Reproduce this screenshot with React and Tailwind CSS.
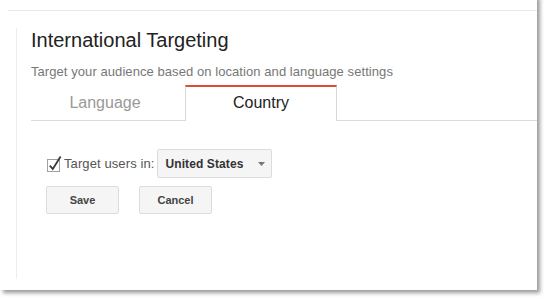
import React from 'react';

export default function App() {
    return (
        <div className="w-[550px] h-[300px] bg-white overflow-hidden font-['Liberation_Sans',Arial,sans-serif]">
            <div className="w-[537px] h-[295px] -mt-[5px] bg-white shadow-[3px_3px_4px_rgba(0,0,0,0.4)] pt-[15px] pl-[8px]">
                <div className="border-t border-[#ebebeb]">
                    <div className="ml-[8px] h-[251px] border-l border-[#ededed] pl-[14px]">
                        <h1 className="mt-[17px] text-[20px] leading-[24px] text-[#222] font-normal">International Targeting</h1>
                        <p className="mt-[12px] text-[13px] leading-[16px] text-[#777] tracking-[0.07px]">Target your audience based on location and language settings</p>

                        {/* tabs */}
                        <div className="mt-[5px] flex">
                            <div className="w-[154px] h-[36px] border-b border-[#dcdcdc] flex items-center justify-center text-[16px] leading-[24px] text-[#999] pr-[6px]">
                                Language
                            </div>
                            <div className="w-[152px] h-[36px] border-t-2 border-t-[#dd4b39] border-x border-x-[#d8d8d8] flex items-center justify-center text-[16px] leading-[24px] text-[#222] pb-[2px]">
                                Country
                            </div>
                            <div className="flex-1 h-[36px] border-b border-[#dcdcdc]"></div>
                        </div>

                        <div className="mt-[28px] pl-[16px] flex items-center">
                            <svg width="15" height="18" viewBox="0 0 15 18" className="shrink-0">
                                <rect x="0.5" y="4.5" width="12" height="12" fill="#fff" stroke="#a0a0a0" />
                                <path d="M2.8 10.6 L5.8 14 L13.6 1.5" fill="none" stroke="#3a3a3a" strokeWidth="1.8" />
                            </svg>
                            <span className="ml-[2px] text-[13px] leading-[16px] text-[#555] tracking-[0.1px]">Target users in:</span>
                            <div className="ml-[3px] w-[115px] h-[29px] bg-[#f5f5f5] border border-[#dcdcdc] rounded-[2px] flex items-center pl-[7px] pr-[6px]">
                                <span className="flex-1 text-[12px] font-bold text-[#333] leading-[16px] tracking-[0.1px]">United States</span>
                                <svg width="7" height="4" viewBox="0 0 7 4">
                                    <path d="M0 0 L7 0 L3.5 4 Z" fill="#777" />
                                </svg>
                            </div>
                        </div>

                        <div className="mt-[8px] pl-[15px] flex gap-[20px]">
                            <button className="w-[73px] h-[28px] bg-[#f5f5f5] border border-[#dcdcdc] rounded-[2px] text-[11px] font-bold text-[#444]">Save</button>
                            <button className="w-[73px] h-[28px] bg-[#f5f5f5] border border-[#dcdcdc] rounded-[2px] text-[11px] font-bold text-[#444]">Cancel</button>
                        </div>
                    </div>
                </div>
            </div>
        </div>
    );
}
